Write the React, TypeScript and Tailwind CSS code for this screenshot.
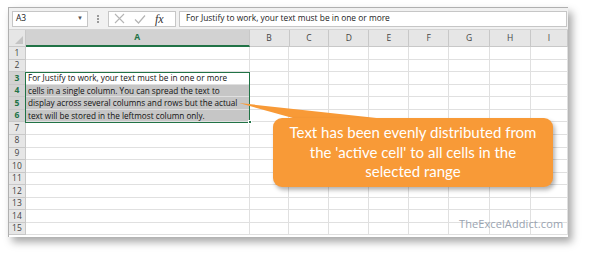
import React from 'react';

const cols = [
  { name: 'A', w: 'w-[224px]' },
  { name: 'B', w: 'w-[40px]' },
  { name: 'C', w: 'w-[40px]' },
  { name: 'D', w: 'w-[40px]' },
  { name: 'E', w: 'w-[40px]' },
  { name: 'F', w: 'w-[40px]' },
  { name: 'G', w: 'w-[41px]' },
  { name: 'H', w: 'w-[41px]' },
  { name: 'I', w: 'w-[37px]' },
];

const cellText: Record<number, string> = {
  3: 'For Justify to work, your text must be in one or more',
  4: 'cells in a single column. You can spread the text to',
  5: 'display across several columns and rows but the actual',
  6: 'text will be stored in the leftmost column only.',
};

const rows = Array.from({ length: 15 }, (_, i) => i + 1);

function FormulaBar() {
  return (
    <div className="flex items-center h-[22px] pl-[3px] bg-[#f1f1f1] border-b border-[#d4d4d4]">
      <div className="flex items-center justify-between w-[76px] h-[16px] bg-white border border-[#c6c6c6] px-[3px]">
        <span className="text-[8.5px] text-[#222]">A3</span>
        <span className="text-[6px] text-[#555] mr-[1px]">▼</span>
      </div>
      <div className="flex flex-col gap-[1px] mx-[9px]">
        <span className="w-[2px] h-[2px] bg-[#9a9a9a]" />
        <span className="w-[2px] h-[2px] bg-[#9a9a9a]" />
        <span className="w-[2px] h-[2px] bg-[#9a9a9a]" />
      </div>
      <div className="flex items-center h-[16px] w-[68px] bg-white border border-[#c6c6c6] px-[5px] gap-[9px]">
        <svg width="11" height="11" viewBox="0 0 11 11">
          <path d="M1 1 L10 10 M10 1 L1 10" stroke="#b5b5b5" strokeWidth="1.1" fill="none" />
        </svg>
        <svg width="12" height="10" viewBox="0 0 12 10">
          <path d="M1 5.5 L4.5 9 L11 1.5" stroke="#b5b5b5" strokeWidth="1.2" fill="none" />
        </svg>
        <span className="text-[12px] italic text-[#333] leading-none" style={{ fontFamily: '"Liberation Serif", serif' }}>
          fx
        </span>
      </div>
      <div className="flex items-center flex-1 h-[16px] bg-white border border-[#c6c6c6] ml-[3px] mr-[1px] pl-[6px]">
        <span className="text-[8.4px] text-[#222]">For Justify to work, your text must be in one or more</span>
      </div>
    </div>
  );
}

function HeaderRow() {
  return (
    <div className="flex h-[17px] bg-[#e6e6e6]">
      <div className="w-[17px] h-full border-r border-b border-[#c8c8c8] flex items-end justify-end p-[2px]">
        <svg width="8" height="8" viewBox="0 0 8 8">
          <path d="M8 0 L8 8 L0 8 Z" fill="#c4c4c4" />
        </svg>
      </div>
      {cols.map((c) =>
        c.name === 'A' ? (
          <div
            key={c.name}
            className={`${c.w} h-full bg-[#d2d2d2] border-r border-[#c8c8c8] border-b-2 border-b-[#217346] flex items-center justify-center text-[8.5px] font-bold text-[#217346]`}
          >
            {c.name}
          </div>
        ) : (
          <div
            key={c.name}
            className={`${c.w} h-full border-r border-b border-[#c8c8c8] flex items-center justify-center text-[8.5px] text-[#444]`}
          >
            {c.name}
          </div>
        )
      )}
    </div>
  );
}

function Row({ n }: { n: number }) {
  const sel = n >= 3 && n <= 6;
  const shaded = n >= 4 && n <= 6;
  return (
    <div className="flex h-[12.57px]">
      <div
        className={`w-[17px] h-full border-r border-b border-[#c8c8c8] flex items-center justify-center text-[8.5px] leading-none ${
          sel ? 'bg-[#d2d2d2] text-[#217346] font-bold' : 'bg-[#e6e6e6] text-[#444]'
        }`}
      >
        {n}
      </div>
      {cols.map((c) => (
        <div
          key={c.name}
          className={`${c.w} h-full border-r border-b border-[#e0e0e0] ${
            c.name === 'A' && shaded ? 'bg-[#c6c6c6]' : 'bg-white'
          } overflow-visible whitespace-nowrap`}
        >
          {c.name === 'A' && cellText[n] && (
            <span className="block pl-[2px] text-[8.2px] leading-[12px] text-[#111]">{cellText[n]}</span>
          )}
        </div>
      ))}
    </div>
  );
}

export default function App() {
  return (
    <div
      className="relative w-[589px] h-[258px] bg-white overflow-hidden"
      style={{ fontFamily: '"Open Sans", "Noto Sans", sans-serif' }}
    >
      <div className="ml-[8px] mt-[7px] w-[560px] h-[230px] bg-white border-t border-l border-[#b0b0b0] shadow-[4px_5px_8px_rgba(0,0,0,0.35)] overflow-hidden">
        <FormulaBar />
        <div className="relative">
          <HeaderRow />
          {rows.map((n) => (
            <Row key={n} n={n} />
          ))}
          {/* selection outline A3:A6 */}
          <div className="absolute left-[16px] top-[41.5px] w-[225px] h-[51px] border border-[#217346]" />
          <div className="absolute left-[238.5px] top-[90px] w-[4px] h-[4px] bg-[#217346] border border-white" />
        </div>
      </div>

      {/* callout pointer */}
      <svg className="absolute left-0 top-0" width="589" height="258" viewBox="0 0 589 258">
        <polygon points="239,103 300,120 395,120" fill="#f89a37" />
      </svg>

      {/* callout */}
      <div className="absolute left-[273px] top-[118px] w-[280px] h-[69px] rounded-[9px] bg-[#f89a37] shadow-[2px_3px_4px_rgba(0,0,0,0.3)] flex items-center justify-center">
        <p
          className="text-white text-[15px] leading-[19.5px] text-center w-[252px]"
          style={{ fontFamily: '"Lato", "Open Sans", sans-serif' }}
        >
          Text has been evenly distributed from the 'active cell' to all cells in the selected range
        </p>
      </div>

      {/* watermark */}
      <div className="absolute left-[459px] top-[216px] text-[11px] text-[#9aa3b0] tracking-[0.1px]">
        TheExcelAddict.com
      </div>
    </div>
  );
}
